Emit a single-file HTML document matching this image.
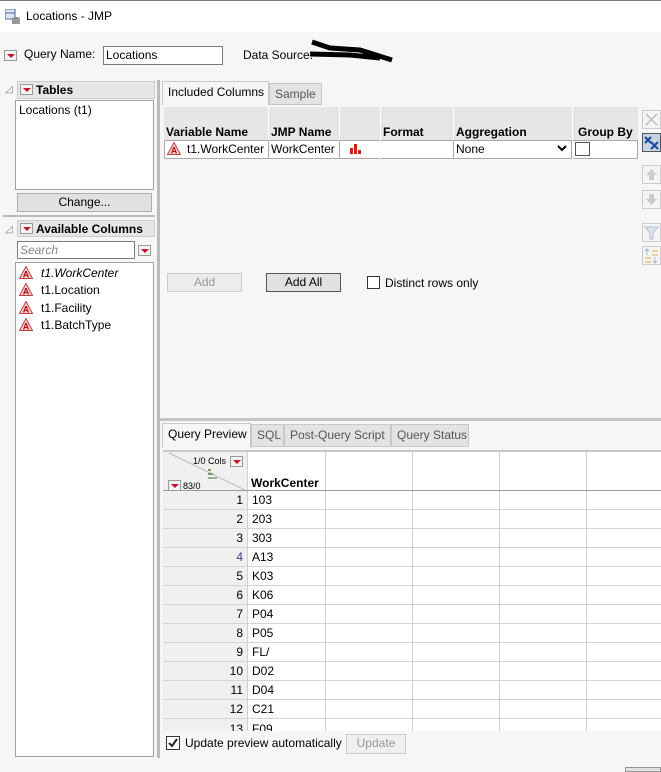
<!DOCTYPE html>
<html><head><style>
*{box-sizing:border-box;margin:0;padding:0}
body{width:661px;height:772px;background:#f6f6f6;font-family:"Liberation Sans",sans-serif;font-size:12px;color:#000;position:relative;overflow:hidden}
.a{position:absolute}
.rb{position:absolute;width:13px;height:11px;border:1px solid #999;background:#f4f4f4}
.rb:after{content:"";position:absolute;left:2px;top:3px;border-left:4px solid transparent;border-right:4px solid transparent;border-top:4px solid #c8102e}
.box{position:absolute;background:#fff;border:1px solid #a0a0a0}
.btn{position:absolute;border:1px solid #adadad;background:#e1e1e1;text-align:center;line-height:17px}
.tab{position:absolute;border:1px solid #c8c8c8;background:#e3e3e3;color:#555;padding-left:5px;line-height:21px}
.ai{display:inline-block;width:14px;height:13px;vertical-align:-2px;margin-right:8px}
.th{position:absolute;font-weight:bold;top:125px}
.gr{position:absolute;left:163px;width:498px;height:19px;border-bottom:1px solid #d4d4d8}
.gr span{position:absolute;left:0;top:2px;width:80px;text-align:right}
.gr b{position:absolute;left:89px;top:2px;font-weight:normal}
.vl{position:absolute;width:1px;background:#d0d0d4}
.sb{position:absolute;left:642px;width:19px;height:19px;border:1px solid #ccc;background:#f4f4f4}
</style></head><body>
<svg width="0" height="0" style="position:absolute"><defs><symbol id="A" viewBox="0 0 14 13"><path d="M7 0.5L13.5 12.5H0.5Z" fill="#f6d0d0" stroke="#c04040"/><text x="7" y="11.5" font-size="9" font-weight="bold" text-anchor="middle" fill="#b01010" font-family="Liberation Sans">A</text></symbol></defs></svg>
<div class="a" style="left:0;top:0;width:661px;height:32px;background:#fff"></div>
<div class="a" style="left:0;top:0;width:661px;height:1px;background:#777"></div>
<svg class="a" style="left:5px;top:9px" width="16" height="16"><rect x="0" y="0" width="10" height="10" fill="#dde6f2" stroke="#4a6a9a"/><line x1="0" y1="4" x2="10" y2="4" stroke="#4a6a9a"/><ellipse cx="11" cy="10" rx="4" ry="2" fill="#888"/><rect x="7" y="10" width="8" height="5" fill="#999"/></svg>
<div class="a" style="left:26px;top:9px;font-size:12px">Locations - JMP</div>

<div class="rb" style="left:4px;top:50px"></div>
<div class="a" style="left:24px;top:47px">Query Name:</div>
<div class="box" style="left:103px;top:46px;width:120px;height:19px;border-color:#7a7a7a;padding:1px 2px">Locations</div>
<div class="a" style="left:243px;top:48px">Data Source:</div>
<svg class="a" style="left:300px;top:38px" width="95" height="30"><path d="M12 4 L30 10 L60 12 L92 22 M10 16 L50 17 L80 20" stroke="#000" stroke-width="5" fill="none"/></svg>

<div class="a" style="left:5px;top:84px;color:#888;font-size:10px">◿</div>
<div class="a" style="left:17px;top:81px;width:138px;height:18px;background:#e6e6e6;border:1px solid #ccc"></div>
<div class="rb" style="left:20px;top:84px"></div>
<div class="a" style="left:36px;top:83px;font-weight:bold">Tables</div>
<div class="box" style="left:15px;top:100px;width:139px;height:90px;padding:2px 3px">Locations (t1)</div>
<div class="btn" style="left:17px;top:193px;width:135px;height:19px">Change...</div>
<div class="a" style="left:3px;top:215px;width:152px;height:2px;background:#bbb"></div>
<div class="a" style="left:5px;top:224px;color:#888;font-size:10px">◿</div>
<div class="a" style="left:17px;top:220px;width:138px;height:17px;background:#e6e6e6;border:1px solid #ccc"></div>
<div class="rb" style="left:20px;top:223px"></div>
<div class="a" style="left:36px;top:222px;font-weight:bold">Available Columns</div>
<div class="box" style="left:17px;top:241px;width:118px;height:18px;border-color:#7a7a7a;color:#888;font-style:italic;padding:1px 2px">Search</div>
<div class="rb" style="left:138px;top:245px"></div>
<div class="box" style="left:15px;top:262px;width:139px;height:495px;padding:2px 3px;line-height:17.3px">
<div><svg class="ai"><use href="#A"/></svg><i>t1.WorkCenter</i></div>
<div><svg class="ai"><use href="#A"/></svg>t1.Location</div>
<div><svg class="ai"><use href="#A"/></svg>t1.Facility</div>
<div><svg class="ai"><use href="#A"/></svg>t1.BatchType</div>
</div>
<div class="a" style="left:157px;top:80px;width:3px;height:678px;background:#bbb"></div>

<div class="tab" style="left:162px;top:81px;width:107px;height:24px;background:#f6f6f6;color:#000;border-bottom:none">Included Columns</div>
<div class="tab" style="left:269px;top:83px;width:53px;height:22px">Sample</div>
<div class="a" style="left:164px;top:107px;width:474px;height:33px;background:#e6e6e6"></div>
<div class="th" style="left:166px">Variable Name</div>
<div class="th" style="left:271px">JMP Name</div>
<div class="th" style="left:383px">Format</div>
<div class="th" style="left:456px">Aggregation</div>
<div class="th" style="left:578px">Group By</div>
<div class="a" style="left:164px;top:140px;width:474px;height:19px;background:#fff;border:1px solid #aaa"></div>
<div class="vl" style="left:268px;top:107px;height:52px;background:#fff"></div>
<div class="vl" style="left:339px;top:107px;height:52px;background:#fff"></div>
<div class="vl" style="left:380px;top:107px;height:52px;background:#fff"></div>
<div class="vl" style="left:453px;top:107px;height:52px;background:#fff"></div>
<div class="vl" style="left:572px;top:107px;height:52px;background:#fff"></div>
<div class="a" style="left:268px;top:140px;width:72px;height:19px;border:1px solid #aaa"></div>
<div class="a" style="left:453px;top:140px;width:119px;height:19px;border:1px solid #aaa"></div>
<div class="a" style="left:167px;top:142px"><svg class="ai" style="margin-right:6px"><use href="#A"/></svg>t1.WorkCenter</div>
<div class="a" style="left:271px;top:142px">WorkCenter</div>
<svg class="a" style="left:350px;top:143px" width="12" height="11"><rect x="0" y="5" width="3" height="6" fill="#d02010"/><rect x="4" y="1" width="3" height="10" fill="#d02010"/><rect x="8" y="7" width="3" height="4" fill="#d02010"/></svg>
<div class="a" style="left:456px;top:142px">None</div>
<svg class="a" style="left:557px;top:145px" width="10" height="7"><path d="M1 1L5 5L9 1" stroke="#000" stroke-width="2" fill="none"/></svg>
<div class="a" style="left:575px;top:142px;width:15px;height:14px;border:1px solid #555;background:#fff"></div>
<div class="sb" style="top:110px"><svg width="17" height="17"><path d="M3 3L14 14M14 3L3 14" stroke="#bbb" stroke-width="1.5"/></svg></div>
<div class="sb" style="top:133px;background:#c8d4e6;border-color:#555"><svg width="17" height="17"><path d="M2 3L8 9M8 3L2 9M8 8L15 15M15 8L8 15" stroke="#1a4d9a" stroke-width="2.2"/></svg></div>
<div class="sb" style="top:165px"><svg width="17" height="17"><path d="M8.5 3L14 9H11V14H6V9H3Z" fill="#ccc"/></svg></div>
<div class="sb" style="top:190px"><svg width="17" height="17"><path d="M8.5 14L14 8H11V3H6V8H3Z" fill="#ccc"/></svg></div>
<div class="sb" style="top:223px"><svg width="17" height="17"><path d="M2 3H15L10 9V15H7V9Z" fill="#dde6ee" stroke="#bbc"/></svg></div>
<div class="sb" style="top:246px"><svg width="17" height="17"><rect x="9" y="3" width="6" height="2" fill="#e6cfa0"/><rect x="9" y="7" width="6" height="2" fill="#e6cfa0"/><rect x="2" y="10" width="6" height="2" fill="#e6cfa0"/><rect x="2" y="14" width="6" height="2" fill="#e6cfa0"/><path d="M4 8V2M2 4L4 2L6 4M12 10V16M10 14L12 16L14 14" stroke="#9ab8dd" fill="none"/></svg></div>
<div class="btn" style="left:167px;top:273px;width:75px;height:19px;background:#ececec;border-color:#ccc;color:#999">Add</div>
<div class="btn" style="left:266px;top:273px;width:75px;height:19px;background:#e1e1e1;border-color:#555">Add All</div>
<div class="a" style="left:367px;top:276px;width:13px;height:13px;border:1px solid #333;background:#fff"></div>
<div class="a" style="left:385px;top:276px">Distinct rows only</div>

<div class="a" style="left:160px;top:418px;width:501px;height:3px;background:#c4c4c4"></div>

<div class="tab" style="left:162px;top:423px;width:89px;height:25px;background:#f6f6f6;color:#000;border-bottom:none">Query Preview</div>
<div class="tab" style="left:251px;top:424px;width:33px;height:23px">SQL</div>
<div class="tab" style="left:284px;top:424px;width:107px;height:23px">Post-Query Script</div>
<div class="tab" style="left:391px;top:424px;width:78px;height:23px">Query Status</div>
<div class="a" style="left:163px;top:450px;width:498px;height:2px;background:#c8c8c8"></div>
<div class="a" style="left:163px;top:452px;width:498px;height:279px;background:#fff;overflow:hidden"></div>
<div class="a" style="left:163px;top:452px;width:84px;height:279px;background:#f0f0f0"></div>
<svg class="a" style="left:163px;top:452px" width="84" height="40"><line x1="6" y1="1" x2="84" y2="39" stroke="#bbb"/><rect x="45" y="21" width="5" height="2" fill="#7a9a6a"/><rect x="45" y="25" width="9" height="2" fill="#9ab08a"/><rect x="45" y="17" width="3" height="2" fill="#7a9a6a"/></svg>
<div class="a" style="left:193px;top:456px;font-size:9px">1/0 Cols</div>
<div class="rb" style="left:230px;top:456px"></div>
<div class="rb" style="left:168px;top:480px"></div>
<div class="a" style="left:183px;top:481px;font-size:9px">83/0</div>
<div class="a" style="left:251px;top:476px;font-weight:bold">WorkCenter</div>
<div class="vl" style="left:247px;top:452px;height:279px"></div>
<div class="vl" style="left:325px;top:452px;height:279px"></div>
<div class="vl" style="left:412px;top:452px;height:279px"></div>
<div class="vl" style="left:499px;top:452px;height:279px"></div>
<div class="vl" style="left:586px;top:452px;height:279px"></div>
<div class="a" style="left:163px;top:490px;width:498px;height:1px;background:#999"></div>
<div class="gr" style="top:491px"><span>1</span><b>103</b></div>
<div class="gr" style="top:510px"><span>2</span><b>203</b></div>
<div class="gr" style="top:529px"><span>3</span><b>303</b></div>
<div class="gr" style="top:548px"><span style="color:#3a3a8a">4</span><b>A13</b></div>
<div class="gr" style="top:567px"><span>5</span><b>K03</b></div>
<div class="gr" style="top:586px"><span>6</span><b>K06</b></div>
<div class="gr" style="top:605px"><span>7</span><b>P04</b></div>
<div class="gr" style="top:624px"><span>8</span><b>P05</b></div>
<div class="gr" style="top:643px"><span>9</span><b>FL/</b></div>
<div class="gr" style="top:662px"><span>10</span><b>D02</b></div>
<div class="gr" style="top:681px"><span>11</span><b>D04</b></div>
<div class="gr" style="top:700px"><span>12</span><b>C21</b></div>
<div class="gr" style="top:719px;height:12px;overflow:hidden;border:none"><span style="top:3px">13</span><b style="top:3px">F09</b></div>
<div class="a" style="left:163px;top:731px;width:498px;height:30px;background:#f6f6f6"></div>
<div class="a" style="left:166px;top:736px;width:14px;height:14px;border:1px solid #333;background:#fff"><svg width="12" height="12"><path d="M2 6L5 9L10 2" stroke="#222" stroke-width="2" fill="none"/></svg></div>
<div class="a" style="left:185px;top:736px">Update preview automatically</div>
<div class="btn" style="left:346px;top:734px;width:60px;height:20px;background:#efefef;border-color:#ccc;color:#999">Update</div>
<div class="a" style="left:625px;top:767px;width:36px;height:5px;border:1px solid #999;background:#e1e1e1"></div>
</body></html>
